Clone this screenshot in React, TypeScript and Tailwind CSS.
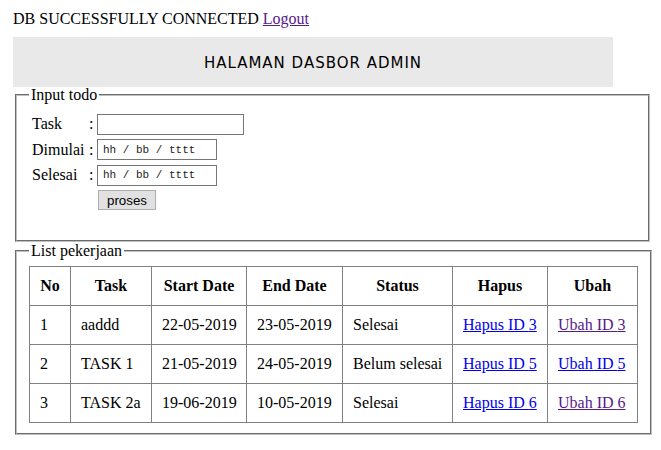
const rows = [
  { no: 1, task: 'aaddd', start: '22-05-2019', end: '23-05-2019', status: 'Selesai', id: 3, visited: true },
  { no: 2, task: 'TASK 1', start: '21-05-2019', end: '24-05-2019', status: 'Belum selesai', id: 5, visited: false },
  { no: 3, task: 'TASK 2a', start: '19-06-2019', end: '10-05-2019', status: 'Selesai', id: 6, visited: true },
];

const serif = "font-['Liberation_Serif','Times_New_Roman',serif]";

function DateInput() {
  return (
    <div className="flex h-[21px] w-[120px] items-center border border-[#767676] bg-white pl-[5px] font-['Liberation_Mono','Courier_New',monospace] text-[11px] text-[#222]">
      hh / bb / tttt
    </div>
  );
}

export default function App() {
  return (
    <div className={`${serif} min-h-[450px] bg-white px-[13px] pt-[10px] text-[16px] leading-[normal] text-black`}>
      <div className="leading-[18px]">
        DB SUCCESSFULLY CONNECTED{' '}
        <a href="#" className="text-[#551a8b] underline">Logout</a>
      </div>

      {/* header */}
      <div className="mt-[9px] flex h-[50px] w-[600px] items-center justify-center bg-[#e9e9e9] pt-[1px]">
        <span className="font-['Comic_Sans_MS','DejaVu_Sans',sans-serif] text-[15px] tracking-[1px]">
          HALAMAN DASBOR ADMIN
        </span>
      </div>

      {/* form */}
      <fieldset className="mx-[2px] -mt-[1px] w-[635px] border-2 border-[#c0c0c0] [border-style:groove] px-3 pb-[30px] pt-[5.6px]">
        <legend className="px-[2px]">Input todo</legend>
        <div className="flex flex-col gap-[4.6px] pl-[3px] pt-[4px]">
          <div className="flex items-center">
            <span className="w-[57px]">Task</span>
            <span className="w-[8px]">:</span>
            <div className="h-[21px] w-[147px] border border-[#767676] bg-white" />
          </div>
          <div className="flex items-center">
            <span className="w-[57px]">Dimulai</span>
            <span className="w-[8px]">:</span>
            <DateInput />
          </div>
          <div className="flex items-center">
            <span className="w-[57px]">Selesai</span>
            <span className="w-[8px]">:</span>
            <DateInput />
          </div>
          <div className="flex pl-[66px]">
            <button className="h-[20px] w-[58px] border border-[#adadad] bg-[#e1e1e1] font-['Liberation_Sans',Arial,sans-serif] text-[13.33px] leading-none">
              proses
            </button>
          </div>
        </div>
      </fieldset>

      {/* list */}
      <fieldset className="mx-[2px] w-[635px] border-2 border-[#c0c0c0] [border-style:groove] px-3 pb-[10px] pt-[5.6px]">
        <legend className="px-[2px]">List pekerjaan</legend>
        <table className="w-[608px] table-fixed border-collapse border border-[#808080] whitespace-nowrap">
          <colgroup>
            <col className="w-[41px]" />
            <col className="w-[81px]" />
            <col className="w-[95px]" />
            <col className="w-[96px]" />
            <col className="w-[110px]" />
            <col className="w-[95px]" />
            <col className="w-[90px]" />
          </colgroup>
          <thead>
            <tr className="h-[39px]">
              {['No', 'Task', 'Start Date', 'End Date', 'Status', 'Hapus', 'Ubah'].map((h) => (
                <th key={h} className="border border-[#808080] px-[10px] text-center font-bold">
                  {h}
                </th>
              ))}
            </tr>
          </thead>
          <tbody>
            {rows.map((r) => (
              <tr key={r.no} className="h-[39px]">
                <td className="border border-[#808080] px-[10px]">{r.no}</td>
                <td className="border border-[#808080] px-[10px]">{r.task}</td>
                <td className="border border-[#808080] px-[10px]">{r.start}</td>
                <td className="border border-[#808080] px-[10px]">{r.end}</td>
                <td className="border border-[#808080] px-[10px]">{r.status}</td>
                <td className="border border-[#808080] px-[10px]">
                  <a href="#" className="text-[#0000ee] underline">Hapus ID {r.id}</a>
                </td>
                <td className="border border-[#808080] px-[10px]">
                  <a href="#" className={r.visited ? 'text-[#551a8b] underline' : 'text-[#0000ee] underline'}>
                    Ubah ID {r.id}
                  </a>
                </td>
              </tr>
            ))}
          </tbody>
        </table>
      </fieldset>
    </div>
  );
}
